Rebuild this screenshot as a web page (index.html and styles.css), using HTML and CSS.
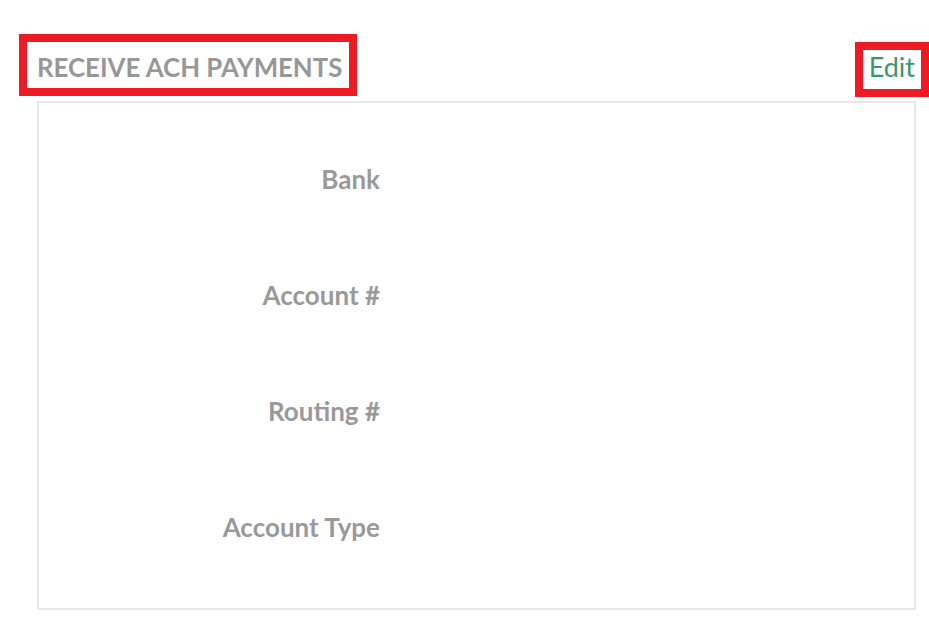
FILE: index.html
```html
<!DOCTYPE html>
<html>
<head>
    <title>Receive ACH Payments</title>
    <link rel="stylesheet" href="styles.css">
</head>
<body>
    <!-- Section wrapper -->
    <div class="ach-section">
        <!-- Header: title on the left, edit link on the right -->
        <div class="ach-header">
            <h2 class="ach-title highlight">RECEIVE ACH PAYMENTS</h2>
            <a class="edit-link highlight" href="#">Edit</a>
        </div>

        <!-- Details card -->
        <div class="ach-card">
            <div class="ach-row">
                <div class="ach-label">Bank</div>
                <div class="ach-value"></div>
            </div>
            <div class="ach-row">
                <div class="ach-label">Account #</div>
                <div class="ach-value"></div>
            </div>
            <div class="ach-row">
                <div class="ach-label">Routing #</div>
                <div class="ach-value"></div>
            </div>
            <div class="ach-row">
                <div class="ach-label">Account Type</div>
                <div class="ach-value"></div>
            </div>
        </div>
    </div>
</body>
</html>
```

FILE: styles.css
```css
/* Basic page styling */
body {
    margin: 0;
    background: white;
    font-family: Lato, "Open Sans", Arial, sans-serif;
}

/* Outer section */
.ach-section {
    padding: 34px 0 0 19px;
}

/* Header row */
.ach-header {
    display: flex;
    justify-content: space-between;
    align-items: baseline;
}

/* Red outline used to mark the title and edit link */
.highlight {
    border: 8px solid #ed1c24;
}

/* Section title */
.ach-title {
    margin: 0;
    padding: 11px 7px 7px 10px;
    font-size: 25.8px;
    font-weight: 700;
    color: #979797;
    line-height: 28px;
}

/* Edit link */
.edit-link {
    color: #3e9572;
    text-decoration: none;
    font-size: 27px;
    line-height: 30px;
    padding: 2px 6px 7px 6px;
}

/* Bordered card */
.ach-card {
    margin: 4px 13px 0 18px;
    border: 2px solid #e8e8e8;
    padding: 18px 0 23px;
}

/* Each label/value row */
.ach-row {
    display: flex;
    align-items: center;
    height: 116px;
}

/* Label column (right aligned) */
.ach-label {
    width: 341px;
    text-align: right;
    font-size: 26px;
    font-weight: 700;
    color: #999;
}

.ach-value {
    flex: 1;
}
```
